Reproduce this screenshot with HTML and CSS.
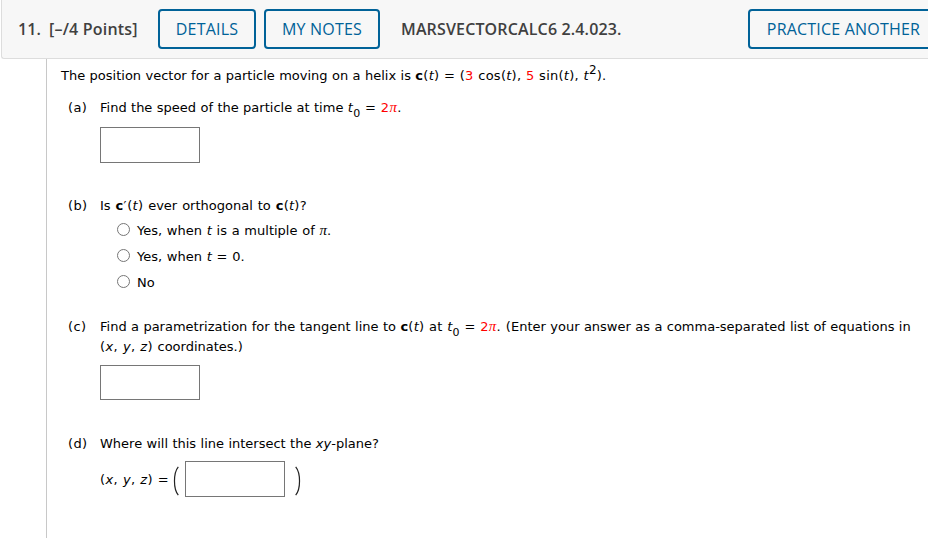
FILE: index.html
```html
<!DOCTYPE html>
<html lang="en">
<head>
    <meta charset="UTF-8">
    <meta name="viewport" content="width=device-width, initial-scale=1.0">
    <title>MARSVECTORCALC6 2.4.023.</title>
    <link rel="stylesheet" href="styles.css">
</head>
<body>
    <div class="header">
        <span class="number">11.</span>
        <span class="points">[–/4 Points]</span>
        <button class="btn btn-details">DETAILS</button>
        <button class="btn btn-notes">MY NOTES</button>
        <span class="title">MARSVECTORCALC6 2.4.023.</span>
        <button class="btn btn-practice">PRACTICE ANOTHER</button>
    </div>
    <div class="question">
        <div class="line">The position vector for a particle moving on a helix is <span class="math"><b>c</b>(<i>t</i>) = (<span class="red">3</span> cos(<i>t</i>), <span class="red">5</span> sin(<i>t</i>), <i>t</i><sup>2</sup>).</span></div>

        <div class="part part-a">
            <span class="letter">(a)</span>
            <div class="content">
                <div class="line">Find the speed of the particle at time <span class="math"><i>t</i><sub>0</sub> = <span class="red">2<span class="pi">π</span></span>.</span></div>
                <input type="text" class="answer" aria-label="speed">
            </div>
        </div>

        <div class="part part-b">
            <span class="letter">(b)</span>
            <div class="content">
                <div class="line wide">Is <span class="math"><b>c</b><span class="prime">′</span>(<i>t</i>)</span> ever orthogonal to <span class="math"><b>c</b>(<i>t</i>)?</span></div>
                <div class="options">
                    <label class="option"><input type="radio" name="orthogonal"><span>Yes, when <i>t</i> is a multiple of <span class="pi">π</span>.</span></label>
                    <label class="option"><input type="radio" name="orthogonal"><span>Yes, when <i>t</i> = 0.</span></label>
                    <label class="option"><input type="radio" name="orthogonal"><span>No</span></label>
                </div>
            </div>
        </div>

        <div class="part part-c">
            <span class="letter">(c)</span>
            <div class="content">
                <div class="line">Find a parametrization for the tangent line to <span class="math"><b>c</b>(<i>t</i>) at <i>t</i><sub>0</sub> = <span class="red">2<span class="pi">π</span></span>. (</span>Enter your answer as a comma-separated list of equations in</div>
                <div class="line"><span class="coords-text">(<i>x</i>, <i>y</i>, <i>z</i>)</span> coordinates.)</div>
                <input type="text" class="answer answer-short" aria-label="tangent line">
            </div>
        </div>

        <div class="part part-d">
            <span class="letter">(d)</span>
            <div class="content">
                <div class="line">Where will this line intersect the <i>xy</i>-plane?</div>
                <div class="point">
                    <span class="line coords coords-text">(<i>x</i>, <i>y</i>, <i>z</i>) =</span>
                    <svg class="paren" width="6" height="30" viewBox="0 0 6 30"><path d="M5.3 0.8 C0.2 7 0.2 23 5.3 29.2" /></svg>
                    <input type="text" class="answer" aria-label="intersection point">
                    <svg class="paren" width="6" height="30" viewBox="0 0 6 30"><path d="M0.7 0.8 C5.8 7 5.8 23 0.7 29.2" /></svg>
                </div>
            </div>
        </div>
    </div>
</body>
</html>
```

FILE: styles.css
```css
body {
    margin: 0;
    background-color: #fff;
    color: #000;
    font-family: Verdana, "DejaVu Sans", sans-serif;
    font-size: 13px;
    word-spacing: 0.27px;
}

.header {
    display: flex;
    align-items: center;
    box-sizing: border-box;
    height: 59px;
    margin-left: 1px;
    padding-left: 16px;
    background-color: #f7f7f7;
    border-left: 1px solid #ddd;
    border-bottom: 1px solid #ddd;
    border-bottom-left-radius: 3px;
    color: #404040;
    font-family: "Open Sans", sans-serif;
    font-size: 16px;
    font-weight: 600;
    letter-spacing: 0.15px;
    word-spacing: 0;
    white-space: nowrap;
    overflow: hidden;
}

.number {
    width: 31px;
    flex-shrink: 0;
}

.points {
    width: 109px;
    letter-spacing: 0.2px;
    flex-shrink: 0;
}

.btn {
    box-sizing: border-box;
    height: 40px;
    padding: 0;
    background-color: #f7f7f7;
    border: 2px solid #006298;
    border-radius: 4px;
    color: #006298;
    font-family: "Open Sans", sans-serif;
    font-size: 16px;
    font-weight: 500;
    letter-spacing: 0.2px;
    flex-shrink: 0;
}

.btn-details {
    width: 98px;
}

.btn-notes {
    width: 116px;
    margin-left: 8px;
}

.title {
    width: 347px;
    margin-left: 21px;
    flex-shrink: 0;
}

.btn-practice {
    width: 191px;
}

.question {
    box-sizing: border-box;
    height: 479px;
    margin-left: 46px;
    padding: 7px 0 0 14px;
    border-left: 1px solid #c8c8c8;
}

.line {
    height: 20px;
    line-height: 20px;
    white-space: nowrap;
}

.wide {
    word-spacing: 0.8px;
}

.math {
    letter-spacing: 0.25px;
}

.coords-text {
    letter-spacing: 0.4px;
}

.prime {
    margin-right: 0.5px;
}

sub,
sup {
    font-size: 11px;
    line-height: 0;
}

sub {
    vertical-align: -5px;
}

sup {
    font-size: 12px;
    vertical-align: 6px;
}

.red {
    color: #f00;
}

.pi {
    font-family: "Liberation Serif", serif;
    font-size: 15px;
    font-style: italic;
    line-height: 0;
}

.part {
    display: flex;
    padding-left: 7px;
}

.letter {
    width: 32px;
    line-height: 20px;
    letter-spacing: 0.4px;
    flex-shrink: 0;
}

.part-a {
    margin-top: 12px;
}

.part-b {
    margin-top: 33px;
}

.part-c {
    margin-top: 22px;
}

.part-d {
    margin-top: 34px;
}

.answer {
    display: block;
    box-sizing: border-box;
    width: 100px;
    height: 36px;
    margin: 9px 0 0;
    border: 1px solid #767676;
    background-color: #fff;
}

.answer-short {
    height: 35px;
    margin-top: 8px;
}

.options {
    padding: 1px 0 0 17px;
    word-spacing: 0.6px;
}

.option {
    display: flex;
    align-items: center;
    height: 26px;
}

.option input {
    width: 13px;
    height: 13px;
    margin: 0 7px 2px 0;
}

.point {
    display: flex;
    align-items: center;
    margin-top: 7px;
}

.point .answer {
    margin: 0 10px 0 6px;
}

.coords {
    width: 73px;
    padding-top: 2px;
}

.paren {
    margin-top: 3px;
    fill: none;
    stroke: #222;
    stroke-width: 1.2;
}
```
